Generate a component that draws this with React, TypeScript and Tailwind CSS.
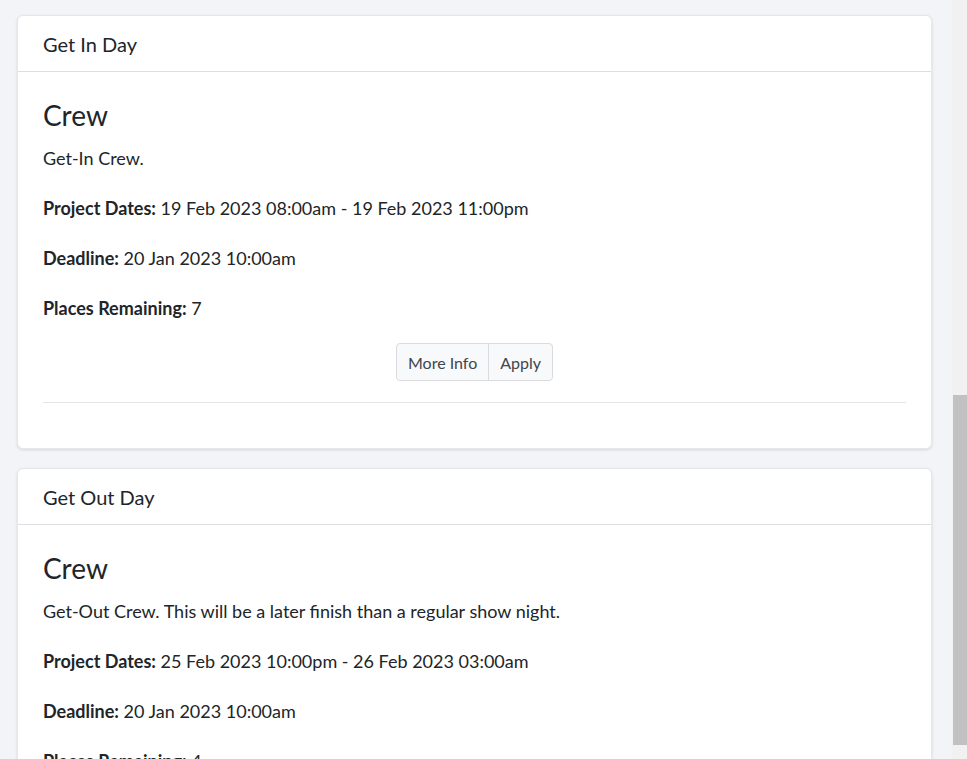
import React from "react";

type Role = {
  day: string;
  title: string;
  description: string;
  dates: string;
  deadline: string;
  places: number;
};

const roles: Role[] = [
  {
    day: "Get In Day",
    title: "Crew",
    description: "Get-In Crew.",
    dates: "19 Feb 2023 08:00am - 19 Feb 2023 11:00pm",
    deadline: "20 Jan 2023 10:00am",
    places: 7,
  },
  {
    day: "Get Out Day",
    title: "Crew",
    description: "Get-Out Crew. This will be a later finish than a regular show night.",
    dates: "25 Feb 2023 10:00pm - 26 Feb 2023 03:00am",
    deadline: "20 Jan 2023 10:00am",
    places: 4,
  },
];

function RoleCard({ role }: { role: Role }) {
  return (
    <div className="shrink-0 rounded-md bg-white border border-[#e6e7eb] shadow-[0_1px_3px_rgba(0,0,0,0.12)]">
      <div className="h-[56px] px-[25px] flex items-center border-b border-[#dcdee2] text-[20px] text-[#212529]">
        {role.day}
      </div>
      <div className="px-[25px] pt-[26px] pb-[45px] text-[18px] leading-[27px] text-[#212529]">
        <h3 className="text-[28px] leading-[34px] mb-[13px]">{role.title}</h3>
        <p className="mb-[23px]">{role.description}</p>
        <p className="mb-[23px]">
          <span className="font-bold">Project Dates:</span> {role.dates}
        </p>
        <p className="mb-[23px]">
          <span className="font-bold">Deadline:</span> {role.deadline}
        </p>
        <p className="mb-[21px]">
          <span className="font-bold">Places Remaining:</span> {role.places}
        </p>
        <div className="flex justify-center">
          <div className="flex rounded-[4px] border border-[#d9dbde] bg-[#f8f9fa] text-[16px] text-[#40464d]">
            <button className="h-[36px] px-[11px] border-r border-[#d9dbde]">More Info</button>
            <button className="h-[36px] px-[11px]">Apply</button>
          </div>
        </div>
        <hr className="mt-[21px] border-t border-[#e3e5e8]" />
      </div>
    </div>
  );
}

export default function App() {
  return (
    <div
      className="flex h-screen overflow-hidden bg-[#f3f4f8]"
      style={{ fontFamily: "Lato, 'Liberation Sans', sans-serif" }}
    >
      <main className="flex-1 flex flex-col gap-[19px] pl-[17px] pr-[20px] pt-[15px]">
        {roles.map((r) => (
          <RoleCard key={r.day} role={r} />
        ))}
      </main>
      <div className="w-[15px] shrink-0 bg-[#f1f1f1] flex flex-col">
        <div className="mt-[395px] ml-[1px] h-[350px] bg-[#c1c1c1]" />
      </div>
    </div>
  );
}
